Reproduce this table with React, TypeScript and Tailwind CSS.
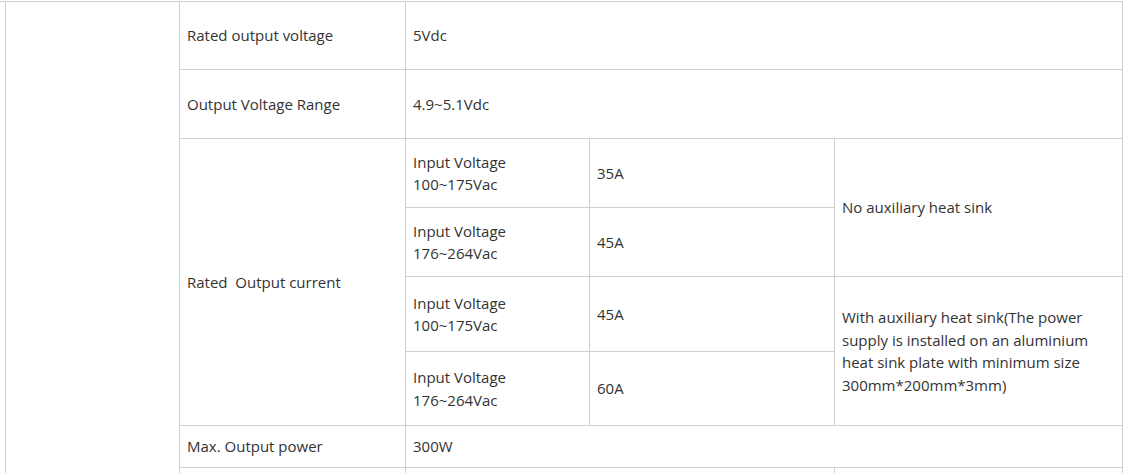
import React from 'react';

const cell = 'border border-[#cfcfcf] px-[7px] align-middle';

export default function App() {
  return (
    <div
      className="relative h-[473px] w-[1126px] overflow-hidden bg-white text-[15px] leading-[22.5px] text-[#333]"
      style={{ fontFamily: '"Open Sans", "Noto Sans", sans-serif' }}
    >
      <div className="absolute left-0 top-[1px] h-px w-[6px] bg-[#cfcfcf]" />
      <table className="ml-[5px] mt-[1px] w-[1117px] table-fixed border-collapse">
        <colgroup>
          <col className="w-[174px]" />
          <col className="w-[226px]" />
          <col className="w-[184px]" />
          <col className="w-[245px]" />
          <col className="w-[288px]" />
        </colgroup>
        <tbody>
          <tr className="h-[68px]">
            <td className={cell} rowSpan={8}></td>
            <td className={cell}>Rated output voltage</td>
            <td className={cell} colSpan={3}>5Vdc</td>
          </tr>
          <tr className="h-[69px]">
            <td className={cell}>Output Voltage Range</td>
            <td className={cell} colSpan={3}>4.9~5.1Vdc</td>
          </tr>
          <tr className="h-[69px]">
            <td className={cell} rowSpan={4}>
              <span className="whitespace-pre">Rated  Output current</span>
            </td>
            <td className={cell}>
              Input Voltage
              <br />
              100~175Vac
            </td>
            <td className={cell}>35A</td>
            <td className={cell} rowSpan={2}>No auxiliary heat sink</td>
          </tr>
          <tr className="h-[69px]">
            <td className={cell}>
              Input Voltage
              <br />
              176~264Vac
            </td>
            <td className={cell}>45A</td>
          </tr>
          <tr className="h-[75px]">
            <td className={cell}>
              Input Voltage
              <br />
              100~175Vac
            </td>
            <td className={cell}>45A</td>
            <td className={cell} rowSpan={2}>
              With auxiliary heat sink(The power supply is installed on an aluminium heat sink plate with minimum size
              300mm*200mm*3mm)
            </td>
          </tr>
          <tr className="h-[74px]">
            <td className={cell}>
              Input Voltage
              <br />
              176~264Vac
            </td>
            <td className={cell}>60A</td>
          </tr>
          <tr className="h-[42px]">
            <td className={cell}>Max. Output power</td>
            <td className={cell} colSpan={3}>300W</td>
          </tr>
          <tr className="h-[42px]">
            <td className={cell}></td>
            <td className={cell} colSpan={2}></td>
            <td className={cell}></td>
          </tr>
        </tbody>
      </table>
    </div>
  );
}
